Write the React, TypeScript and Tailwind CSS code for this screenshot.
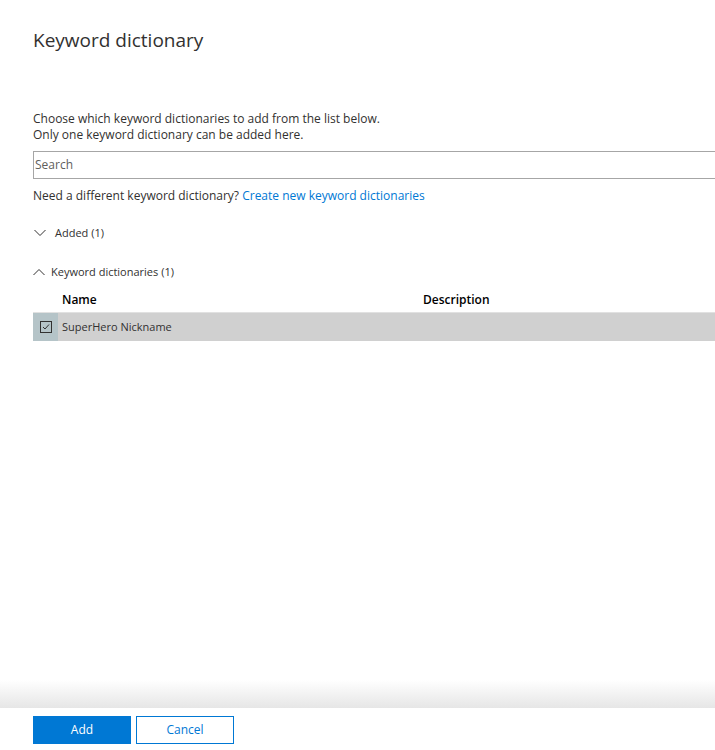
export default function App() {
  const font = { fontFamily: '"Segoe UI", "Open Sans", sans-serif' };

  return (
    <div className="h-[750px] w-[715px] overflow-hidden bg-white flex flex-col text-[#323130]" style={font}>
      <div className="flex-1 pl-[33px]">
        {/* Title */}
        <h1 className="pt-[26px] text-[19px] leading-[28px] text-[#323130]">Keyword dictionary</h1>

        {/* Intro */}
        <div className="mt-[57px] text-[12px] leading-[16px] text-[#323130]">
          <p>Choose which keyword dictionaries to add from the list below.</p>
          <p>Only one keyword dictionary can be added here.</p>
        </div>

        {/* Search */}
        <div className="mt-[8px] h-[28px] w-[700px] border border-[#a6a6a6] flex items-center">
          <span className="pl-[1px] text-[12px] text-[#605e5c]">Search</span>
        </div>

        <p className="mt-[9px] text-[12px] leading-[16px]">
          Need a different keyword dictionary?{" "}
          <span className="text-[#0078d4]">Create new keyword dictionaries</span>
        </p>

        {/* Added */}
        <div className="mt-[21px] flex items-center h-[16px] text-[11px]">
          <svg width="12" height="8" viewBox="0 0 12 8" className="ml-[1px] mr-[9px]" fill="none" stroke="#323130" strokeWidth="1">
            <path d="M0.5 1 L6 6.5 L11.5 1" />
          </svg>
          <span>Added (1)</span>
        </div>

        {/* Keyword dictionaries */}
        <div className="mt-[23px] flex items-center h-[16px] text-[11px]">
          <svg width="12" height="8" viewBox="0 0 12 8" className="mr-[6px]" fill="none" stroke="#323130" strokeWidth="1">
            <path d="M0.5 7 L6 1.5 L11.5 7" />
          </svg>
          <span>Keyword dictionaries (1)</span>
        </div>

        {/* Table */}
        <div className="mt-[8px]">
          <div className="flex h-[24px] items-center text-[12px] font-semibold text-black">
            <div className="w-[29px]" />
            <div className="w-[361px]">Name</div>
            <div>Description</div>
          </div>
          <div className="flex h-[29px] border-t border-[#e1e1e1] bg-[#d0d0d0] text-[11px]">
            <div className="w-[25px] bg-[#b5c4c8] flex items-center justify-center">
              <div className="w-[12px] h-[12px] border border-[#323130] flex items-center justify-center">
                <svg width="10" height="10" viewBox="0 0 10 10" fill="none" stroke="#323130" strokeWidth="1">
                  <path d="M2 5 L4 7 L8 2.5" />
                </svg>
              </div>
            </div>
            <div className="pl-[4px] flex items-center">SuperHero Nickname</div>
          </div>
        </div>
      </div>

      {/* Footer */}
      <div className="h-[28px] bg-gradient-to-b from-white to-[#e6e6e6]" />
      <div className="h-[42px] pl-[33px] pt-[8px] flex gap-[5px]">
        <button className="w-[98px] h-[28px] bg-[#0078d4] text-white text-[12px]">Add</button>
        <button className="w-[98px] h-[28px] border border-[#0078d4] bg-white text-[#0078d4] text-[12px]">Cancel</button>
      </div>
    </div>
  );
}
